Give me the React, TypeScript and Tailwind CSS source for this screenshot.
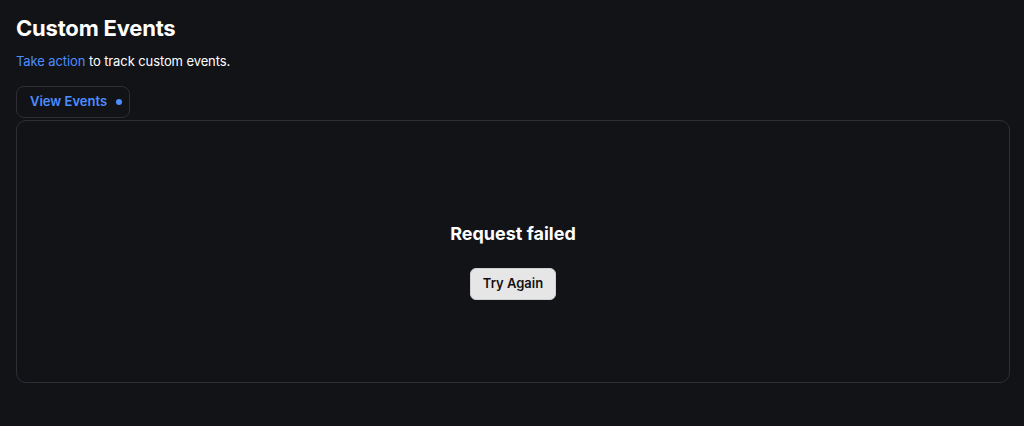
export default function App() {
  return (
    <div
      className="min-h-[426px] bg-[#121317] px-4 pt-[14px] pb-10 text-white"
      style={{ fontFamily: 'Inter, "Noto Sans", sans-serif' }}
    >
      <h1 className="text-[22px] font-bold leading-[28px] tracking-[-0.2px]">Custom Events</h1>
      <p className="mt-[11px] text-[13px] leading-4 tracking-[-0.1px]">
        <span className="text-[#4c8dff]">Take action</span> to track custom events.
      </p>

      <div className="mt-[17px] flex">
        <button
          type="button"
          className="flex h-8 w-[114px] items-center gap-[9px] rounded-lg border border-[#2d2f35] pl-[13px] text-[13px] font-semibold text-[#4c8dff]"
        >
          <span>View Events</span>
          <span className="h-[6px] w-[6px] rounded-full bg-[#4c8dff]" />
        </button>
      </div>

      <div className="mt-[2px] mr-[-2px] flex h-[263px] flex-col items-center justify-center rounded-[10px] border border-[#2d2f35]">
        <h2 className="mt-[18px] text-[18px] font-bold leading-6">Request failed</h2>
        <button
          type="button"
          className="mt-[22px] h-8 rounded-md border border-[#d0d0d0] bg-[#e6e6e6] px-3 text-[13px] font-semibold text-[#111]"
        >
          Try Again
        </button>
      </div>
    </div>
  );
}
